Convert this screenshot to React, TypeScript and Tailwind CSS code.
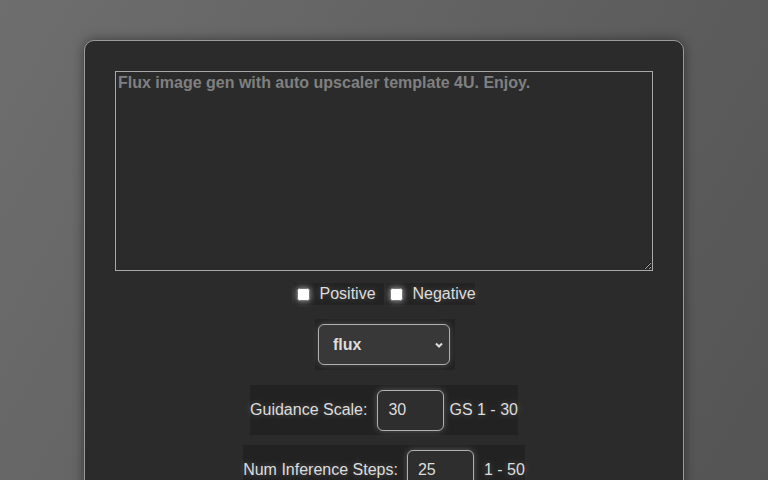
import React from 'react';

const glowText = '[text-shadow:0_0_6px_rgba(255,255,255,0.25)]';

export default function App() {
  return (
    <div className="h-[480px] w-full bg-[linear-gradient(120deg,#6e6e6e_0%,#626262_45%,#545454_100%)] pt-10 font-['Liberation_Sans',Arial,sans-serif] overflow-hidden">
      <div className="mx-auto w-[600px] h-[520px] rounded-[10px] border border-[#9a9a9a] bg-[#2b2b2b] p-[30px] shadow-[0_0_12px_rgba(0,0,0,0.45)]">
        <textarea
          className="block w-[538px] h-[200px] border border-[#a8a8a8] bg-[#2b2b2b] p-[2px] text-base leading-[18px] font-bold text-[#ddd] placeholder:text-[#808080] outline-none"
          placeholder="Flux image gen with auto upscaler template 4U. Enjoy."
        />

        <div className="mt-[12px] flex justify-center gap-[2px]">
          <label className={`flex h-[22px] w-[90px] items-center bg-[#232323] pl-[3px] text-base text-[#ddd] ${glowText}`}>
            <input type="checkbox" className="h-[13px] w-[13px] shadow-[0_0_6px_rgba(255,255,255,0.6)]" />
            <span className="ml-[10px]">Positive</span>
          </label>
          <label className={`flex h-[22px] w-[89px] items-center bg-[#232323] pl-[4px] text-base text-[#ddd] ${glowText}`}>
            <input type="checkbox" className="h-[13px] w-[13px] shadow-[0_0_6px_rgba(255,255,255,0.6)]" />
            <span className="ml-[10px]">Negative</span>
          </label>
        </div>

        <div className="mt-[14px] flex justify-center">
          <div className="ml-[2px] flex bg-[#232323] pl-[3px] pr-[5px] py-[5px]">
            <div className="relative">
              <select className="h-[41px] w-[132px] appearance-none rounded-[6px] border border-[#b0b0b0] bg-[#383838] pl-[14px] text-base font-bold text-[#ddd] shadow-[0_0_6px_rgba(255,255,255,0.2)] outline-none">
                <option>flux</option>
              </select>
              <svg className="pointer-events-none absolute right-[6px] top-[17px]" width="10" height="8" viewBox="0 0 10 8">
                <path d="M2 2.5 L5 5.5 L8 2.5" fill="none" stroke="#ddd" strokeWidth="2" />
              </svg>
            </div>
          </div>
        </div>

        <div className="mt-[15px] flex justify-center">
          <div className={`flex h-[50px] items-center bg-[#222] text-base text-[#ddd] ${glowText}`}>
            <span>Guidance Scale:</span>
            <input
              defaultValue="30"
              className="ml-[10px] h-[41px] w-[67px] rounded-[6px] border border-[#b0b0b0] bg-[#2e2e2e] px-[10px] text-base text-[#ddd] shadow-[0_0_6px_rgba(255,255,255,0.25)] outline-none"
            />
            <span className="ml-[5px]">GS 1 - 30</span>
          </div>
        </div>

        <div className="mt-[10px] flex justify-center">
          <div className={`flex h-[50px] items-center bg-[#222] text-base text-[#ddd] ${glowText}`}>
            <span>Num Inference Steps:</span>
            <input
              defaultValue="25"
              className="ml-[9px] h-[41px] w-[67px] rounded-[6px] border border-[#b0b0b0] bg-[#2e2e2e] px-[10px] text-base text-[#ddd] shadow-[0_0_6px_rgba(255,255,255,0.25)] outline-none"
            />
            <span className="ml-[10px]">1 - 50</span>
          </div>
        </div>
      </div>
    </div>
  );
}
